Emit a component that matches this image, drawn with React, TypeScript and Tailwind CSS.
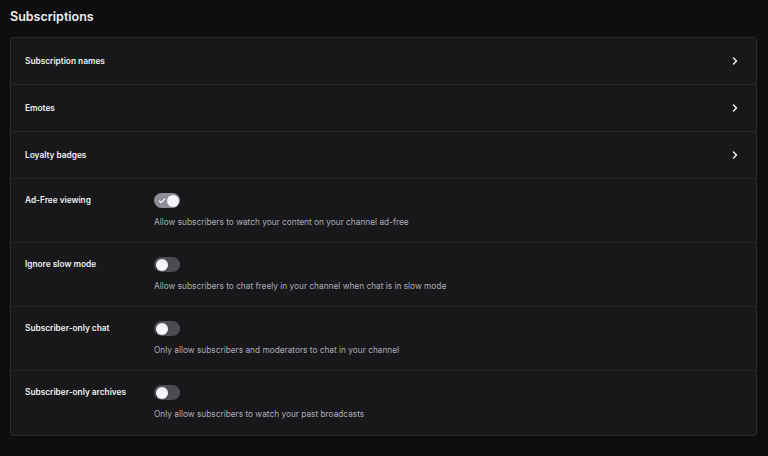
import { ChevronRight, Check } from "lucide-react";

type ToggleRow = { label: string; desc: string; on: boolean };

const links = ["Subscription names", "Emotes", "Loyalty badges"];

const toggles: ToggleRow[] = [
  { label: "Ad-Free viewing", desc: "Allow subscribers to watch your content on your channel ad-free", on: true },
  { label: "Ignore slow mode", desc: "Allow subscribers to chat freely in your channel when chat is in slow mode", on: false },
  { label: "Subscriber-only chat", desc: "Only allow subscribers and moderators to chat in your channel", on: false },
  { label: "Subscriber-only archives", desc: "Only allow subscribers to watch your past broadcasts", on: false },
];

function Toggle({ on }: { on: boolean }) {
  return (
    <div
      className={`relative w-[26px] h-[15px] rounded-full ${on ? "bg-[#8f8c99]" : "bg-[#4b4b52]"}`}
    >
      {on && <Check className="absolute left-[4px] top-[3.5px] w-[8px] h-[8px] text-white" strokeWidth={3.5} />}
      <div
        className={`absolute top-[1.5px] w-[12px] h-[12px] rounded-full bg-[#f4f4f6] ${on ? "right-[1.5px]" : "left-[1.5px]"}`}
      />
    </div>
  );
}

export default function App() {
  return (
    <div
      className="w-[768px] h-[456px] bg-[#0e0e10] px-[10px] pt-[9px] overflow-hidden"
      style={{ fontFamily: "Inter, 'Noto Sans', sans-serif" }}
    >
      <h1 className="text-[12.5px] font-semibold text-[#efeff1] leading-[16px] h-[28px]">Subscriptions</h1>
      <div className="w-[747px] rounded-[3px] border border-[#2a2a2f] bg-[#18181b]">
        {links.map((l) => (
          <div key={l} className="h-[47px] flex items-center justify-between pl-[14px] pr-[15px] border-b border-[#26262b]">
            <span className="text-[8.3px] font-semibold text-[#efeff1] pt-[1px]">{l}</span>
            <ChevronRight className="w-[12px] h-[12px] text-[#efeff1]" strokeWidth={3} />
          </div>
        ))}
        {toggles.map((t, i) => (
          <div
            key={t.label}
            className={`h-[64px] flex pl-[14px] pt-[14px] ${i < toggles.length - 1 ? "border-b border-[#26262b]" : ""}`}
          >
            <div className="w-[129px] text-[8.3px] font-semibold text-[#efeff1] leading-[14px]">{t.label}</div>
            <div className="flex flex-col gap-[7px]">
              <Toggle on={t.on} />
              <span className="text-[8.3px] text-[#adadb8] leading-[14px]">{t.desc}</span>
            </div>
          </div>
        ))}
      </div>
    </div>
  );
}
